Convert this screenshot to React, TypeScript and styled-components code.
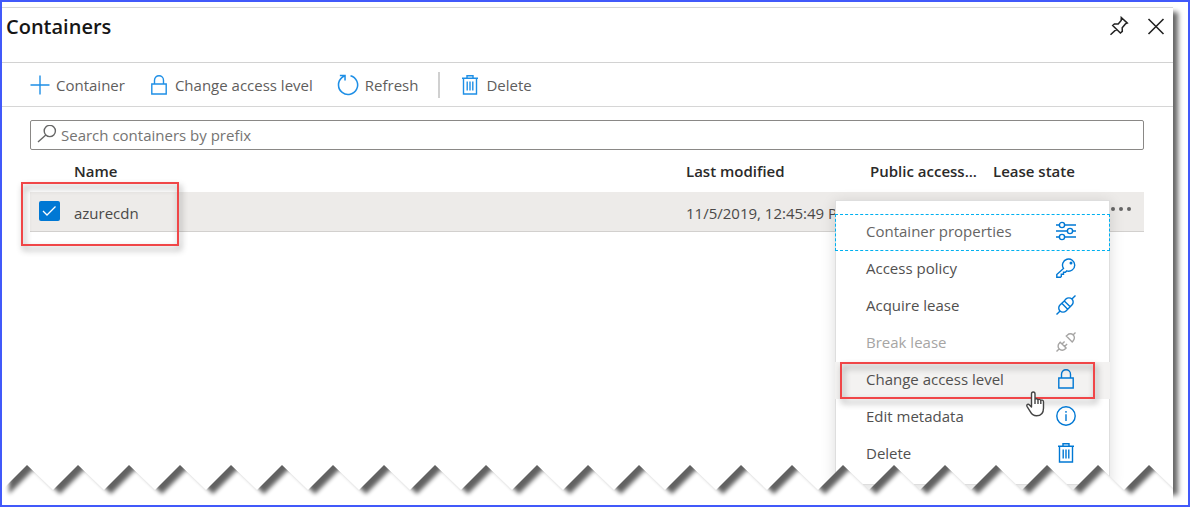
import React from "react";
import styled, { createGlobalStyle, css } from "styled-components";

const BLUE = "#0078d4";

const GlobalStyle = createGlobalStyle`
  *, *::before, *::after { box-sizing: border-box; }
  body {
    margin: 0;
    background: #fff;
    color: #4a4948;
    font: 15px/20px "Open Sans", "Noto Sans", sans-serif;
  }
  button, input { font: inherit; color: inherit; }
`;

const Frame = styled.div`
  display: flex;
  min-height: 100vh;
  padding: 5px 15px 15px 0;
  border: 2px solid #4159fa;
  overflow: hidden;
`;

const Blade = styled.main`
  position: relative;
  flex: 1;
  min-width: 0;
  background: #fff;
  border-top: 1px solid #d6d6d6;
  box-shadow: 5px 5px 5px rgba(0, 0, 0, 0.6);
`;

const Header = styled.header`
  display: flex;
  justify-content: space-between;
  height: 55px;
  padding: 4px 6px 0 4px;
  border-bottom: 1px solid #d2d2d2;
`;

const Title = styled.h1`
  margin: 0;
  color: #161616;
  font-size: 20px;
  font-weight: 600;
  line-height: 30px;
`;

const HeaderActions = styled.div`
  display: flex;
  gap: 14px;
`;

const IconButton = styled.button`
  display: grid;
  place-items: center;
  width: 23px;
  height: 28px;
  padding: 0;
  border: 0;
  background: none;
  color: #222;
`;

const Toolbar = styled.div`
  display: flex;
  align-items: center;
  gap: 24px;
  height: 44px;
  padding: 0 28px;
  border-bottom: 1px solid #d6d6d6;
`;

const Command = styled.button`
  display: flex;
  align-items: center;
  gap: 6px;
  padding: 0;
  border: 0;
  background: none;
  color: #5f5e5d;
  white-space: nowrap;
  svg { color: #1e8fe6; }
`;

const Divider = styled.span`
  width: 2px;
  height: 26px;
  margin: 0 -4px;
  background: #d0d0d0;
`;

const Content = styled.div`
  padding: 13px 29px 0 28px;
`;

const Search = styled.label`
  display: flex;
  align-items: center;
  gap: 4px;
  height: 30px;
  padding: 0 6px;
  border: 1px solid #8a8886;
  border-radius: 2px;
  color: #666;
`;

const SearchInput = styled.input`
  flex: 1;
  min-width: 0;
  padding: 0;
  border: 0;
  outline: 0;
  background: none;
  &::placeholder { color: #757473; opacity: 1; }
`;

const Table = styled.table`
  width: 100%;
  table-layout: fixed;
  border-collapse: separate;
  border-spacing: 0;
`;

const Th = styled.th<{ $width?: number }>`
  width: ${(p) => (p.$width ? `${p.$width}px` : "auto")};
  height: 42px;
  padding: 0;
  color: #2b2a29;
  font-weight: 600;
  text-align: left;
  white-space: nowrap;
`;

const Td = styled.td`
  position: relative;
  height: 40px;
  padding: 2px 0 0;
  background: #edebe9;
  border-bottom: 1px solid #d2d0ce;
  white-space: nowrap;
`;

const Check = styled.label`
  display: grid;
  width: 21px;
  height: 20px;
  margin: -4px 0 0 9px;
  > * { grid-area: 1 / 1; }
  svg { pointer-events: none; }
`;

const CheckInput = styled.input`
  appearance: none;
  width: 21px;
  height: 20px;
  margin: 0;
  border-radius: 2px;
  &:checked { background: ${BLUE}; }
`;

const MoreButton = styled.button`
  display: grid;
  place-items: center start;
  width: 32px;
  height: 24px;
  padding: 0 0 0 4px;
  margin-top: -8px;
  border: 0;
  background: none;
`;

const highlight = css`
  position: absolute;
  border: 2px solid #f04648;
  filter: drop-shadow(2px 4px 3px rgba(0, 0, 0, 0.42));
  pointer-events: none;
`;

const RowHighlight = styled.span`
  ${highlight}
  z-index: 1;
  top: -10px;
  left: -9px;
  width: 158px;
  height: 64px;
`;

const ItemHighlight = styled.span`
  ${highlight}
  inset: 0 15px 0 5px;
`;

const Menu = styled.ul`
  position: absolute;
  z-index: 2;
  top: 8px;
  right: 34px;
  width: 275px;
  margin: 0;
  padding: 13px 0 11px;
  list-style: none;
  background: #fff;
  border: 1px solid #dedede;
  box-shadow: 0 3px 14px rgba(0, 0, 0, 0.14);
`;

const MenuRow = styled.li`
  position: relative;
  height: 37px;
  margin: 0 -1px;
`;

const MenuButton = styled.button<{ $focused?: boolean; $hovered?: boolean }>`
  display: flex;
  align-items: center;
  justify-content: space-between;
  width: 100%;
  height: 37px;
  padding: 0 33px 3px 30px;
  border-width: 1px;
  border-style: ${(p) => (p.$focused ? "dashed" : "solid")};
  border-color: ${(p) => (p.$focused ? "#00b0f0" : "transparent")};
  background: ${(p) => (p.$hovered ? "#f3f2f1" : "none")};
  color: ${(p) => (p.$focused ? "#666564" : "#51504f")};
  svg { color: ${BLUE}; }
  &:disabled, &:disabled svg { color: #a6a5a4; }
`;

const Pointer = styled.svg`
  position: absolute;
  top: 29px;
  right: 65px;
`;

const TornEdge = styled.svg`
  position: absolute;
  z-index: 3;
  left: 0;
  bottom: -15px;
  width: 100%;
  height: 45px;
  pointer-events: none;
`;

type IconProps = { size?: number; children: React.ReactNode };

const Icon = ({ size = 20, children }: IconProps) => (
  <svg width={size} height={size} viewBox="0 0 20 20" fill="none" stroke="currentColor" strokeWidth="1.4" aria-hidden="true">
    {children}
  </svg>
);

const PlusIcon = () => <Icon><path d="M10 .5v19M.5 10h19" /></Icon>;
const LockIcon = () => (
  <Icon><path d="M2.800 9h14.400v10H2.800zM5.500 9V5.200C5.500 2.600 7.500.8 10 .8s4.500 1.800 4.500 4.400V9" /></Icon>
);
const RefreshIcon = () => (
  <Icon size={22}><path d="M12.300 1.500A8.700 8.700 0 1 1 4.400 3.300L7 1.400M2.600 1.300h4.700v4.500" /></Icon>
);
const TrashIcon = () => (
  <Icon>
    <path d="M2 3.200h16M7 3V.8h6V3M3.500 3.500V19h13V3.500" />
    <path d="M7.200 6.500v9M10 6.500v9M12.800 6.500v9" />
  </Icon>
);
const SearchIcon = () => (
  <Icon><circle cx="12.800" cy="6" r="5.600" /><path d="M8.800 10L1 17" /></Icon>
);
const PinIcon = () => (
  <Icon><path d="M12.300 1.500l6 5.600-1.900.8-3.200 3.800.1 3.600-1.900 1.700-7.700-7.500 1.700-1.600 3.800.1 3-3.600zM7.300 13.400L1.500 18.800" strokeWidth="1.500" /></Icon>
);
const CloseIcon = () => <Icon><path d="M2.500 3l15 15M17.500 3l-15 15" strokeWidth="1.600" /></Icon>;
const SlidersIcon = () => (
  <Icon>
    <path d="M0 4h3.300M8.700 4H20M0 10h11.300M16.700 10H20M0 16h3.300M8.700 16H20" />
    <circle cx="6" cy="4" r="2.600" /><circle cx="14" cy="10" r="2.600" /><circle cx="6" cy="16" r="2.600" />
  </Icon>
);
const KeyIcon = () => (
  <Icon>
    <path d="M7.500 10.400A6.100 6.100 0 1 1 10.800 12.900L9.300 14.300H7.500v2H5.300v2.200L4.500 19.300H.8V16.500z" />
    <circle cx="15" cy="5" r=".8" fill="currentColor" />
  </Icon>
);
const PlugIcon = () => (
  <Icon>
    <path d="M15.900 4.100L19.500.5M.5 19.500l3.600-3.600M8.300 5.900l5.900 5.900 1.700-1.700a4.200 4.200 0 0 0 0-6 4.200 4.200 0 0 0-6 0zM5.800 8.300l5.900 5.900-1.700 1.700a4.200 4.200 0 0 1-6 0 4.200 4.200 0 0 1 0-6zM8.300 5.900L5.800 8.300M14.200 11.800l-2.500 2.400" />
  </Icon>
);
const UnplugIcon = () => (
  <Icon>
    <path d="M17 3l2.500-2.500M.5 19.500L3.300 16.700M10.300 4l5.900 5.900 1-1.200a4 4 0 0 0 0-5.700 4 4 0 0 0-5.700 0zM4.200 10.200l5.900 5.900-1 1a4 4 0 0 1-5.800-.1 4 4 0 0 1 0-5.700zM6 12l2.600-2.600M8.500 14.500l2.600-2.600" />
  </Icon>
);
const InfoIcon = () => (
  <Icon><circle cx="10" cy="10" r="9.200" /><path d="M10 8.300V15M10 5v1.700" /></Icon>
);

const HandPointer = () => (
  <Pointer width="19" height="26" viewBox="0 0 19 26" aria-hidden="true">
    <path
      d="M5.500 16V3c0-2.600 3.500-2.600 3.500 0v6c0-1.800 3-1.600 3 .3 0-1.500 2.800-1.200 2.800.6 0-1.300 2.700-1 2.700.8V17c0 5-2.800 7.800-7 7.800-3.600 0-5-1.800-6.700-5L1 15.300c-.7-1.600 1.200-2.800 2.500-1.400L5.500 16zM9 8v5M12 9.300V13M14.800 10v3"
      fill="#fff" stroke="#444" strokeWidth="1.400" strokeLinejoin="round"
    />
  </Pointer>
);

/* Saw-tooth lower edge of the blade, long enough for very wide windows. */
const TOOTH = 51;
const teeth = Array.from({ length: 80 }, (_, i) => `L${i * TOOTH + 25} 5L${(i + 1) * TOOTH} 30`).join("");
const edgeEnd = 80 * TOOTH;

const Tear = () => (
  <TornEdge aria-hidden="true">
    <defs>
      <clipPath id="below"><path d={`M0 30${teeth}V45H0z`} /></clipPath>
      <filter id="soft" filterUnits="userSpaceOnUse" x="-10" y="-30" width={edgeEnd} height="90">
        <feGaussianBlur stdDeviation="2" />
      </filter>
    </defs>
    <g clipPath="url(#below)">
      <rect width="100%" height="45" fill="#fff" />
      <path d={`M0 30${teeth}V-20H0z`} transform="translate(7 4)" fill="#000" opacity=".62" filter="url(#soft)" />
    </g>
  </TornEdge>
);

type Item = { label: string; icon: React.ReactNode; focused?: boolean; hovered?: boolean; disabled?: boolean };

const items: Item[] = [
  { label: "Container properties", icon: <SlidersIcon />, focused: true },
  { label: "Access policy", icon: <KeyIcon /> },
  { label: "Acquire lease", icon: <PlugIcon /> },
  { label: "Break lease", icon: <UnplugIcon />, disabled: true },
  { label: "Change access level", icon: <LockIcon />, hovered: true },
  { label: "Edit metadata", icon: <InfoIcon /> },
  { label: "Delete", icon: <TrashIcon /> },
];

export default function App() {
  return (
    <>
      <GlobalStyle />
      <Frame>
        <Blade>
          <Header>
            <Title>Containers</Title>
            <HeaderActions>
              <IconButton aria-label="Pin"><PinIcon /></IconButton>
              <IconButton aria-label="Close"><CloseIcon /></IconButton>
            </HeaderActions>
          </Header>
          <Toolbar>
            <Command><PlusIcon />Container</Command>
            <Command><LockIcon />Change access level</Command>
            <Command><RefreshIcon />Refresh</Command>
            <Divider />
            <Command><TrashIcon />Delete</Command>
          </Toolbar>
          <Content>
            <Search>
              <SearchIcon />
              <SearchInput type="text" aria-label="Search containers" placeholder="Search containers by prefix" />
            </Search>
            <Table>
              <thead>
                <tr>
                  <Th $width={44} aria-label="Selected" />
                  <Th>Name</Th>
                  <Th $width={184}>Last modified</Th>
                  <Th $width={123}>Public access...</Th>
                  <Th $width={113}>Lease state</Th>
                  <Th $width={38} aria-label="Actions" />
                </tr>
              </thead>
              <tbody>
                <tr>
                  <Td>
                    <Check>
                      <CheckInput type="checkbox" defaultChecked aria-label="Select azurecdn" />
                      <svg width="21" height="20" viewBox="0 0 21 20" fill="none" stroke="#fff" strokeWidth="1.300" aria-hidden="true">
                        <path d="M4 10l4 4 8.500-8.500" />
                      </svg>
                    </Check>
                    <RowHighlight />
                  </Td>
                  <Td>azurecdn</Td>
                  <Td>11/5/2019, 12:45:49 PM</Td>
                  <Td />
                  <Td />
                  <Td>
                    <MoreButton aria-label="More actions">
                      <svg width="22" height="6" viewBox="0 0 22 6" fill="#666" aria-hidden="true">
                        <circle cx="3" cy="3" r="2" /><circle cx="11" cy="3" r="2" /><circle cx="19" cy="3" r="2" />
                      </svg>
                    </MoreButton>
                    <Menu>
                      {items.map((item) => (
                        <MenuRow key={item.label}>
                          <MenuButton $focused={item.focused} $hovered={item.hovered} disabled={item.disabled}>
                            {item.label}
                            {item.icon}
                          </MenuButton>
                          {item.hovered && <><ItemHighlight /><HandPointer /></>}
                        </MenuRow>
                      ))}
                    </Menu>
                  </Td>
                </tr>
              </tbody>
            </Table>
          </Content>
          <Tear />
        </Blade>
      </Frame>
    </>
  );
}
